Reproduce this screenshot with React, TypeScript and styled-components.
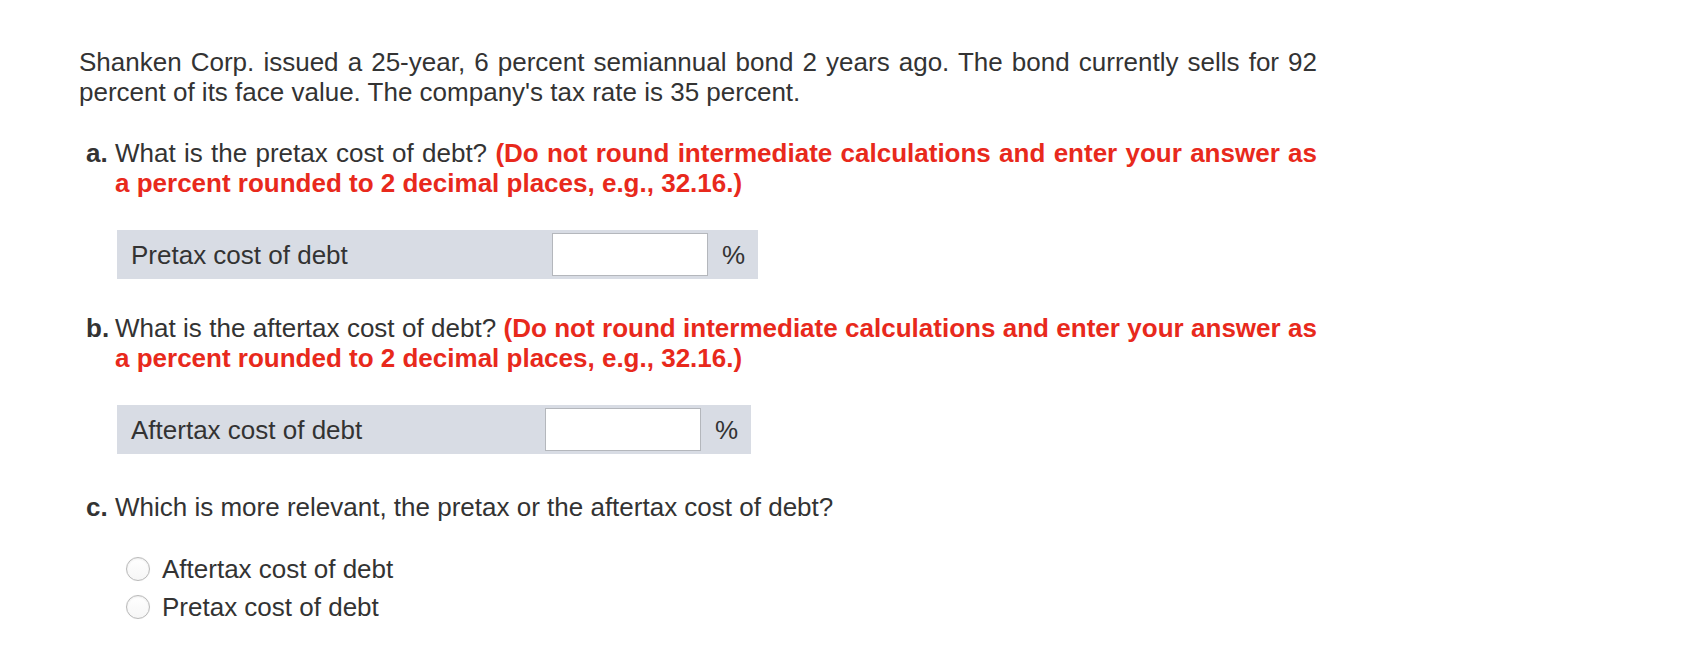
import React from "react";
import styled, { createGlobalStyle } from "styled-components";

const Global = createGlobalStyle`
  html, body { margin: 0; padding: 0; background: #ffffff; }
  body {
    font-family: "Liberation Sans", Arial, Helvetica, sans-serif;
    color: #333333;
  }
`;

const Page = styled.main`
  width: 1690px;
  min-height: 652px;
  box-sizing: border-box;
  padding: 47px 0 0 79px;
  font-size: 26px;
  line-height: 30px;
`;

const Intro = styled.p`
  margin: 0;
  width: 1238px;
`;

const Line = styled.span<{ $justify?: boolean }>`
  display: block;
  white-space: nowrap;
  text-align: ${(p) => (p.$justify ? "justify" : "left")};
  text-align-last: ${(p) => (p.$justify ? "justify" : "auto")};
  white-space: ${(p) => (p.$justify ? "normal" : "nowrap")};
`;

const Question = styled.section<{ $top: number }>`
  display: flex;
  margin: ${(p) => p.$top}px 0 0 7px;
`;

const Marker = styled.span`
  flex: none;
  width: 29px;
  font-weight: bold;
`;

const QBody = styled.div`
  display: flex;
  flex-direction: column;
  align-items: flex-start;
`;

const Prompt = styled.p<{ $w?: number }>`
  margin: 0;
  width: ${(p) => (p.$w ? `${p.$w}px` : "auto")};
  white-space: nowrap;
`;

const Hint = styled.strong`
  color: #e8291c;
  font-weight: bold;
`;

const Band = styled.div`
  display: flex;
  align-items: center;
  margin: 32px 0 0 2px;
  height: 49px;
  padding: 0 14px;
  background: #d8dce4;
`;

const BandLabel = styled.label<{ $w: number }>`
  flex: none;
  width: ${(p) => p.$w}px;
`;

const Field = styled.input`
  flex: none;
  box-sizing: border-box;
  width: 156px;
  height: 43px;
  margin: 0;
  border: 1px solid #b4b7bc;
  background: #ffffff;
  font: inherit;
  padding: 0 8px;
  outline: none;
`;

const Unit = styled.span`
  flex: none;
  margin-left: 14px;
  width: 22px;
`;

const Choices = styled.div`
  display: flex;
  flex-direction: column;
  margin: 28px 0 0 11px;
`;

const Choice = styled.label`
  display: flex;
  align-items: center;
  height: 38px;
  gap: 12px;
  cursor: pointer;
`;

const RadioDot = styled.span`
  flex: none;
  box-sizing: border-box;
  width: 24px;
  height: 24px;
  border-radius: 50%;
  border: 1px solid #b9b9b9;
  background: linear-gradient(#ffffff, #f6f6f6);
  box-shadow: inset 0 1px 2px rgba(0, 0, 0, 0.08), 0 0 1px rgba(0, 0, 0, 0.08);
`;

type AnswerProps = { label: string; labelWidth: number };

const Answer = ({ label, labelWidth }: AnswerProps) => (
  <Band>
    <BandLabel $w={labelWidth}>{label}</BandLabel>
    <Field type="text" aria-label={label} />
    <Unit>%</Unit>
  </Band>
);

type PartProps = { question: string };

const RoundingPrompt = ({ question }: PartProps) => (
  <Prompt $w={1202}>
    <Line $justify>
      {question} <Hint>(Do not round intermediate calculations and enter your answer as</Hint>
    </Line>
    <Line>
      <Hint>a percent rounded to 2 decimal places, e.g., 32.16.)</Hint>
    </Line>
  </Prompt>
);

export default function App() {
  return (
    <>
      <Global />
      <Page>
        <Intro>
          <Line $justify>
            Shanken Corp. issued a 25-year, 6 percent semiannual bond 2 years ago. The bond currently sells for 92
          </Line>
          <Line>percent of its face value. The company's tax rate is 35 percent.</Line>
        </Intro>

        <Question $top={31}>
          <Marker>a.</Marker>
          <QBody>
            <RoundingPrompt question="What is the pretax cost of debt?" />
            <Answer label="Pretax cost of debt" labelWidth={421} />
          </QBody>
        </Question>

        <Question $top={34}>
          <Marker>b.</Marker>
          <QBody>
            <RoundingPrompt question="What is the aftertax cost of debt?" />
            <Answer label="Aftertax cost of debt" labelWidth={414} />
          </QBody>
        </Question>

        <Question $top={38}>
          <Marker>c.</Marker>
          <QBody>
            <Prompt>Which is more relevant, the pretax or the aftertax cost of debt?</Prompt>
            <Choices>
              <Choice>
                <RadioDot />
                Aftertax cost of debt
              </Choice>
              <Choice>
                <RadioDot />
                Pretax cost of debt
              </Choice>
            </Choices>
          </QBody>
        </Question>
      </Page>
    </>
  );
}
